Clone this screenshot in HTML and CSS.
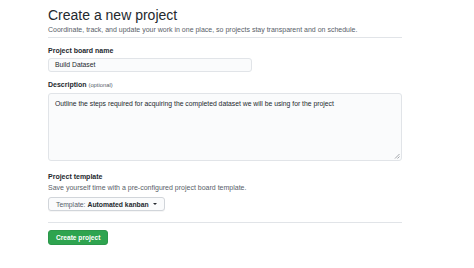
FILE: index.html
```html
<!DOCTYPE html>
<html>
<head>
<meta charset="utf-8">
<link rel="stylesheet" href="styles.css">
</head>
<body>
<div class="page">
  <div class="head">
    <h1 class="title">Create a new project</h1>
    <p class="lead">Coordinate, track, and update your work in one place, so projects stay transparent and on schedule.</p>
  </div>
  <div class="field">
    <label class="label">Project board name</label>
    <div class="input">Build Dataset</div>
  </div>
  <div class="field">
    <label class="label">Description <span class="note">(optional)</span></label>
    <div class="textarea">Outline the steps required for acquiring the completed dataset we will be using for the project
      <svg class="grip" width="6" height="6" viewBox="0 0 6 6"><path d="M5.5 1 L1 5.5 M5.5 3.5 L3.5 5.5" stroke="#8a8f95" stroke-width="0.8"/></svg>
    </div>
  </div>
  <div class="field template">
    <label class="label">Project template</label>
    <p class="hint">Save yourself time with a pre-configured project board template.</p>
    <div class="select"><span class="muted">Template:</span> <b>Automated kanban</b> <span class="caret"></span></div>
  </div>
  <div class="actions">
    <div class="btn">Create project</div>
  </div>
</div>
</body>
</html>
```
FILE: styles.css
```css
html, body { margin: 0; padding: 0; background: #fff; }
body { font-family: "Liberation Sans", Arial, sans-serif; color: #24292e; }
.page { width: 354px; margin-left: 48px; padding-top: 7px; }
.head { border-bottom: 1px solid #e1e4e8; padding-bottom: 3px; }
.title { font-size: 14px; font-weight: 400; margin: 0; line-height: 16px; }
.lead { font-size: 7px; color: #586069; margin: 2px 0 0; line-height: 9px; }
.field { margin-top: 8px; }
.label { display: block; font-size: 7px; font-weight: 700; line-height: 9px; margin-bottom: 3px; }
.note { font-weight: 400; font-size: 5.8px; color: #586069; }
.input { width: 190px; height: 12px; border: 1px solid #e1e4e8; border-radius: 3px; background: #fafbfc; font-size: 6.8px; line-height: 12px; padding: 0 6px; }
.textarea { position: relative; height: 57px; border: 1px solid #e1e4e8; border-radius: 3px; background: #fafbfc; font-size: 6.8px; line-height: 9px; padding: 5px 6px 4px; }
.grip { position: absolute; right: 1px; bottom: 1px; }
.template { margin-top: 11px; }
.template .label { margin-bottom: 2px; }
.hint { font-size: 7px; color: #586069; margin: 0 0 5px; line-height: 9px; }
.select { display: flex; width: fit-content; align-items: center; gap: 2px; height: 12px; border: 1px solid #d1d5da; border-radius: 3px; background: #fafbfc; font-size: 6.8px; padding: 0 7px; box-shadow: 0 1px 0 rgba(27,31,35,.04); }
.select .muted { color: #586069; }
.select b { font-weight: 700; color: #24292e; }
.caret { width: 0; height: 0; border-left: 2px solid transparent; border-right: 2px solid transparent; border-top: 2px solid #24292e; margin-left: 2px; }
.actions { border-top: 1px solid #e1e4e8; margin-top: 11px; padding-top: 7px; }
.btn { display: block; width: fit-content; background: #2ea44f; color: #fff; font-size: 6.6px; font-weight: 700; height: 13px; line-height: 13px; padding: 0 7px; border-radius: 3px; border: 1px solid #2c974b; }
```
